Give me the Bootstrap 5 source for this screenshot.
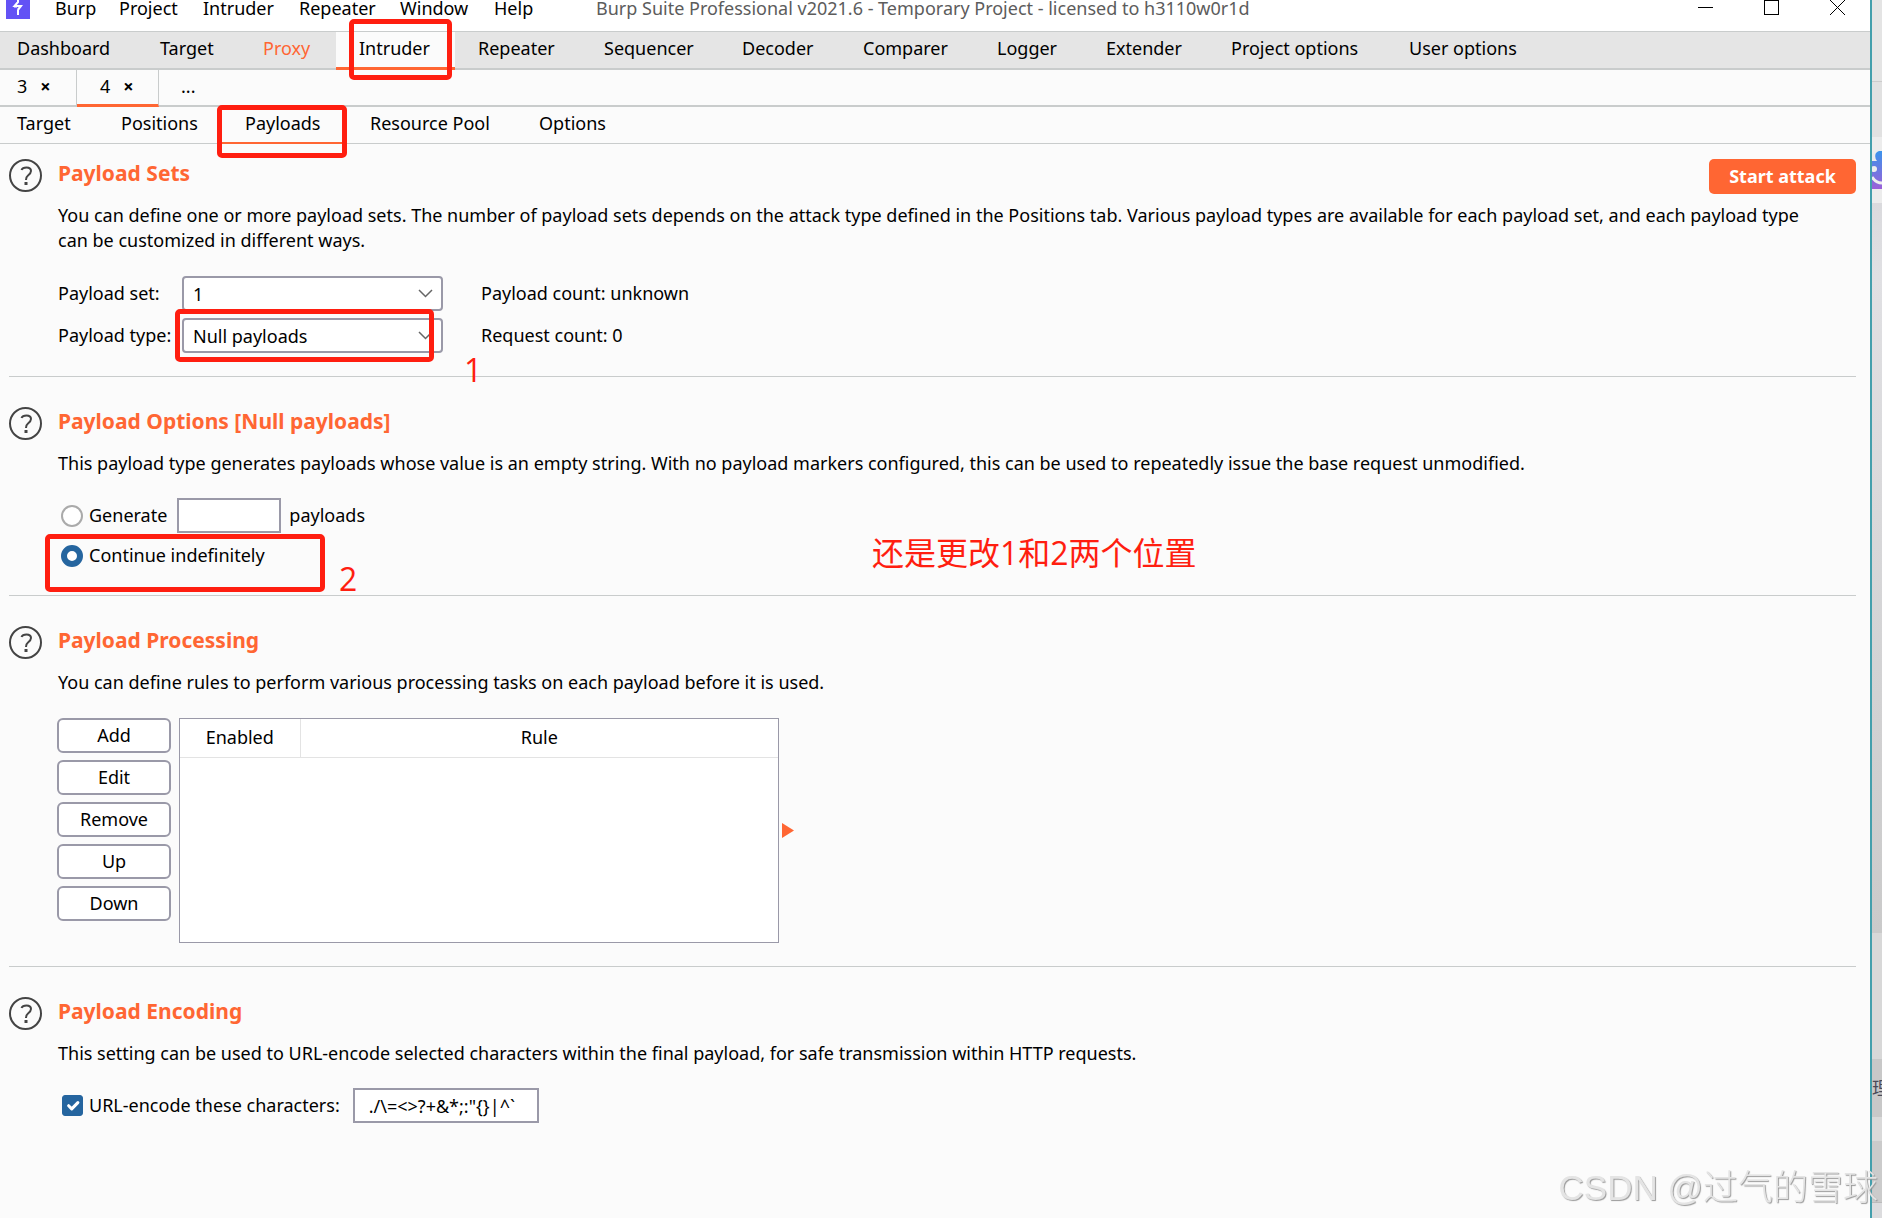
<!DOCTYPE html>
<html lang="en">
<head>
<meta charset="utf-8">
<meta name="viewport" content="width=device-width, initial-scale=1">
<title>Burp Suite Professional v2021.6 - Temporary Project</title>
<link href="https://cdn.jsdelivr.net/npm/bootstrap@5.3.0/dist/css/bootstrap.min.css" rel="stylesheet">
<style>
:root{--burp:#ff6633;--rule:#c9cccc;--edge:#9a99a8;--note:#ff1e10}
body{font-family:"Noto Sans","Open Sans","Noto Sans CJK SC",sans-serif;font-size:18px;line-height:25px;color:#000;background:#dcdcde;overflow:hidden}
a{color:inherit;text-decoration:none}
.app-window{background:#fbfbfb;border-right:2px solid #439fac;min-width:0}
.title-bar{height:31px;background:#fff;padding-left:6px;line-height:17px}
.title-bar .menu-row,.title-bar .window-title,.title-bar .logo-mark{margin-bottom:14px}
.logo-mark{width:24px;height:20px;margin-right:25px}
.menu-row{display:grid;grid-template-columns:64px 84px 96px 101px 94px 102px}
.window-title{color:#5c5c5c}
.win-controls{gap:51px;padding-right:25px}
.win-controls button{border:0;background:none;padding:0;width:15px;height:20px;display:flex}
.tool-tabs{background:#e5e5e5;border-top:1px solid var(--rule);border-bottom:2px solid var(--rule);height:39px;display:grid;
 grid-template-columns:137px 103px 96px 119px 126px 138px 121px 134px 109px 125px 178px auto;justify-content:start}
.tool-tabs a{padding-left:23px;line-height:33px;position:relative;z-index:1}
.tool-tabs a:first-child{padding-left:17px}
.tool-tabs a.proxy-tab{color:var(--burp)}
.tool-tabs a.current{background:#fbfbfb;box-shadow:inset 0 -3px var(--burp);height:38px}
.flagged::after{content:"";position:absolute;border:5px solid var(--note);border-radius:5px;pointer-events:none;z-index:3}
.mark-intruder::after{left:13px;right:3px;top:-13px;bottom:-10px}
.run-tabs{height:37px;border-bottom:2px solid var(--rule)}
.run-tabs a{display:flex;gap:13px;padding:0 25px 0 17px;line-height:33px;border-right:1px solid var(--rule);width:77px}
.run-tabs a.current{width:82px;padding-left:23px;height:37px;border-bottom:3px solid var(--burp)}
.run-tabs a.more{border:0;padding-left:22px}
.run-tabs span{font-weight:700}
.sub-tabs{height:37px;border-bottom:1px solid var(--rule);display:grid;grid-template-columns:97px 124px 125px 169px auto;justify-content:start}
.sub-tabs a{padding-left:24px;line-height:32px;position:relative}
.sub-tabs a:first-child{padding-left:17px}
.sub-tabs a.current{box-shadow:inset 0 -2px var(--burp);height:37px}
.mark-payloads::after{left:-4px;right:-1px;top:-2px;bottom:-14px}
.panel{margin:0 14px 0 9px;padding:13px 0 23px;border-bottom:1px solid var(--rule);gap:16px;position:relative}
.panel + .panel{padding-top:28px}
.panel:last-child{border:0}
.help-btn{border:0;background:none;padding:0;width:33px;height:35px;margin-top:1px;flex:none}
.panel-body{min-width:0}
h2{font-size:21px;line-height:32px;font-weight:700;color:var(--burp);margin:0 0 14px}
.attack-btn{background:var(--burp);color:#fff;font-weight:700;border:0;border-radius:5px;width:147px;height:35px;padding:0;font-size:18px;line-height:35px;position:absolute;right:0;top:15px}
.attack-btn:hover{background:#e8551f;color:#fff}
p{margin:0;padding-right:32px}
.set-grid{display:grid;grid-template-columns:124px 261px auto;row-gap:7px;margin-top:23px;align-items:center;justify-content:start}
.set-grid .count-text{padding-left:38px}
.pick{appearance:none;border:2px solid var(--edge);border-radius:4px;height:35px;padding:0 34px 0 9px;font-size:18px;line-height:28px;color:#000;background-color:#fff;background-size:15px 9px;background-position:right 8px center;
 background-image:url("data:image/svg+xml,%3Csvg xmlns='http://www.w3.org/2000/svg' viewBox='0 0 15 9'%3E%3Cpath d='M1 1l6.500 6.500L14 1' fill='none' stroke='%23666' stroke-width='1.500'/%3E%3C/svg%3E")}
.holder{position:relative}
.mark-type::after{left:-7px;right:9px;top:-9px;bottom:-9px}
.note{position:absolute;color:var(--note);font-family:"Open Sans","Noto Sans CJK SC",sans-serif;font-size:32px;line-height:36px;white-space:nowrap;z-index:3}
.note-one{left:282px;top:34px}
.note-two{left:281px;top:28px}
.note-main{left:863px;top:158px}
.plain-box{border:2px solid var(--edge);border-radius:0;height:35px;padding:0 14px;font-size:18px;line-height:28px;color:#000;background:#fff}
.form-check-input.dot{width:22px;height:22px;margin:0 6px 0 3px;border:2px solid #aaa;flex:none}
.form-check-input.dot:checked{background:#fff;border:6px solid #25659f}
.gen-row{margin-top:22px;height:35px}
.gen-row .plain-box{width:104px;margin:0 8px 0 10px}
.endless-row{height:45px;position:relative}
.mark-endless::after{left:-13px;width:280px;top:1px;height:58px}
.options-panel{padding-bottom:17px}
.stack-list{gap:7px}
.stack-btn{width:114px;height:35px;border:2px solid var(--edge);border-radius:6px;background:#fff;padding:0;font-size:18px;line-height:29px;color:#000}
.rule-area{margin-top:23px;gap:8px;margin-left:-1px}
.rule-box{width:600px;height:225px;border:1px solid var(--edge);background:#fff}
.rule-box table{width:100%;table-layout:fixed;border-collapse:collapse}
.rule-box th{font-weight:400;text-align:center;height:38px;border-bottom:1px solid #e3e3e3;padding:0}
.rule-box th:first-child{width:120px;border-right:1px solid #e3e3e3}
.arrow{margin-left:3px}
.form-check-input.tick{width:21px;height:21px;margin:0 6px 0 4px;flex:none;border-radius:3px}
.form-check-input.tick:checked{background-color:#25659f;border-color:#25659f;background-size:20px}
.enc-row{margin-top:22px;height:35px}
.enc-row .plain-box{width:186px;margin-left:13px}
.behind{width:10px;flex:none;color:#4b4b58;overflow:hidden}
.behind div{flex:none}
.watermark{position:fixed;right:4px;bottom:6px;font-family:"Liberation Sans","Noto Sans CJK SC",sans-serif;font-weight:300;font-size:35px;line-height:48px;color:#e4e4e4;text-shadow:1px 1px 1px #999;z-index:5}
.strip-a{height:82px;background:#e4e4e4;border-bottom:1px solid #ccc}
.strip-b{height:55px;background:#e1e1e1}
.strip-c{height:66px;background:#ececec;padding-top:14px}
.strip-d{height:730px;background:linear-gradient(#dadadd,#e0e0e3 10%,#cacaca)}
.strip-e{height:126px;background:#d8d8d8}
.strip-f{height:58px;background:#c8c8c8;line-height:58px;white-space:nowrap}
.strip-g{height:24px;background:#d9d9d9}
.strip-h{height:62px;background:#cbcbcb;border-bottom:1px solid #bbb}
</style>
<script src="https://cdn.jsdelivr.net/npm/bootstrap@5.3.0/dist/js/bootstrap.bundle.min.js"></script>
</head>
<body>
<div class="d-flex vh-100">
<div class="app-window flex-grow-1">
 <header class="title-bar d-flex align-items-center">
  <svg class="logo-mark flex-shrink-0" viewBox="0 0 24 20" aria-label="Burp"><rect width="24" height="20" fill="#6352f5"/><path d="M12 0v3L8.500 7h6.500L12 11v5M8 7.500h3M15 7l-3 3.500" fill="none" stroke="#fff" stroke-width="2"/></svg>
  <nav class="menu-row"><a href="#">Burp</a><a href="#">Project</a><a href="#">Intruder</a><a href="#">Repeater</a><a href="#">Window</a><a href="#">Help</a></nav>
  <span class="window-title">Burp Suite Professional v2021.6 - Temporary Project - licensed to h3110w0r1d</span>
  <div class="win-controls d-flex ms-auto align-self-start">
   <button aria-label="Minimize"><svg width="15" height="16"><path d="M0 7.500h15" stroke="#000"/></svg></button>
   <button aria-label="Maximize"><svg width="15" height="16"><rect x=".5" y=".5" width="14" height="14" fill="none" stroke="#000"/></svg></button>
   <button aria-label="Close"><svg width="15" height="16"><path d="M0 0l15 15M15 0L0 15" stroke="#000"/></svg></button>
  </div>
 </header>
 <nav class="tool-tabs">
  <a href="#">Dashboard</a><a href="#">Target</a><a href="#" class="proxy-tab">Proxy</a><a href="#" class="current flagged mark-intruder">Intruder</a><a href="#">Repeater</a><a href="#">Sequencer</a><a href="#">Decoder</a><a href="#">Comparer</a><a href="#">Logger</a><a href="#">Extender</a><a href="#">Project options</a><a href="#">User options</a>
 </nav>
 <nav class="run-tabs d-flex"><a href="#">3 <span>×</span></a><a href="#" class="current">4 <span>×</span></a><a href="#" class="more">...</a></nav>
 <nav class="sub-tabs"><a href="#">Target</a><a href="#">Positions</a><a href="#" class="current flagged mark-payloads">Payloads</a><a href="#">Resource Pool</a><a href="#">Options</a></nav>
 <main>
  <section class="panel d-flex align-items-start">
   <button class="help-btn" aria-label="Help"><svg width="33" height="33" viewBox="0 0 33 33"><circle cx="16.500" cy="16.500" r="15.500" fill="none" stroke="#444" stroke-width="2"/><path d="M12.500 11q1-2.500 5-2.500 4.500 0 4.500 3.500 0 2-3 4.500-2 1.500-2 4.500" fill="none" stroke="#444" stroke-width="2"/><rect x="15.500" y="23" width="3" height="3" fill="#444"/></svg></button>
   <div class="panel-body"><h2>Payload Sets</h2>
    <p>You can define one or more payload sets. The number of payload sets depends on the attack type defined in the Positions tab. Various payload types are available for each payload set, and each payload type can be customized in different ways.</p>
    <div class="set-grid">
     <label for="pset">Payload set:</label><select id="pset" class="form-select pick"><option>1</option></select><span class="count-text">Payload count: unknown</span>
     <label for="ptype">Payload type:</label><div class="holder flagged mark-type"><select id="ptype" class="form-select pick"><option>Null payloads</option></select><span class="note note-one">1</span></div><span class="count-text">Request count: 0</span>
    </div></div>
   <button class="btn attack-btn">Start attack</button>
  </section>
  <section class="panel options-panel d-flex align-items-start">
   <button class="help-btn" aria-label="Help"><svg width="33" height="33" viewBox="0 0 33 33"><circle cx="16.500" cy="16.500" r="15.500" fill="none" stroke="#444" stroke-width="2"/><path d="M12.500 11q1-2.500 5-2.500 4.500 0 4.500 3.500 0 2-3 4.500-2 1.500-2 4.500" fill="none" stroke="#444" stroke-width="2"/><rect x="15.500" y="23" width="3" height="3" fill="#444"/></svg></button>
   <div class="panel-body"><h2>Payload Options [Null payloads]</h2>
    <p>This payload type generates payloads whose value is an empty string. With no payload markers configured, this can be used to repeatedly issue the base request unmodified.</p>
    <div class="gen-row d-flex align-items-center"><input type="radio" name="gen" id="g1" class="form-check-input dot"><label for="g1">Generate</label><input type="text" class="plain-box" id="gn" aria-label="Number of payloads"><label for="gn">payloads</label></div>
    <div class="endless-row d-flex align-items-center flagged mark-endless"><input type="radio" name="gen" id="g2" class="form-check-input dot" checked><label for="g2">Continue indefinitely</label><span class="note note-two">2</span></div>
   </div>
   <span class="note note-main" lang="zh-CN">还是更改1和2两个位置</span>
  </section>
  <section class="panel d-flex align-items-start">
   <button class="help-btn" aria-label="Help"><svg width="33" height="33" viewBox="0 0 33 33"><circle cx="16.500" cy="16.500" r="15.500" fill="none" stroke="#444" stroke-width="2"/><path d="M12.500 11q1-2.500 5-2.500 4.500 0 4.500 3.500 0 2-3 4.500-2 1.500-2 4.500" fill="none" stroke="#444" stroke-width="2"/><rect x="15.500" y="23" width="3" height="3" fill="#444"/></svg></button>
   <div class="panel-body"><h2>Payload Processing</h2>
    <p>You can define rules to perform various processing tasks on each payload before it is used.</p>
    <div class="rule-area d-flex">
     <div class="stack-list d-flex flex-column"><button class="btn stack-btn">Add</button><button class="btn stack-btn">Edit</button><button class="btn stack-btn">Remove</button><button class="btn stack-btn">Up</button><button class="btn stack-btn">Down</button></div>
     <div class="d-flex align-items-center"><div class="rule-box"><table><thead><tr><th>Enabled</th><th>Rule</th></tr></thead></table></div>
     <svg class="arrow" width="12" height="15"><path d="M0 0l12 7.500L0 15z" fill="#ff6633"/></svg></div>
    </div></div>
  </section>
  <section class="panel d-flex align-items-start">
   <button class="help-btn" aria-label="Help"><svg width="33" height="33" viewBox="0 0 33 33"><circle cx="16.500" cy="16.500" r="15.500" fill="none" stroke="#444" stroke-width="2"/><path d="M12.500 11q1-2.500 5-2.500 4.500 0 4.500 3.500 0 2-3 4.500-2 1.500-2 4.500" fill="none" stroke="#444" stroke-width="2"/><rect x="15.500" y="23" width="3" height="3" fill="#444"/></svg></button>
   <div class="panel-body"><h2>Payload Encoding</h2>
    <p>This setting can be used to URL-encode selected characters within the final payload, for safe transmission within HTTP requests.</p>
    <div class="enc-row d-flex align-items-center"><input type="checkbox" class="form-check-input tick" id="enc" checked><label for="enc">URL-encode these characters:</label><input type="text" class="plain-box" aria-label="Characters" value="./\=&lt;&gt;?+&amp;*;:&quot;{}|^`"></div>
   </div>
  </section>
 </main>
</div>
<aside class="behind d-flex flex-column">
 <div class="strip-a"></div>
 <div class="strip-b"></div>
 <div class="strip-c"><svg width="10" height="40"><defs><linearGradient id="bot" x2="0" y2="1"><stop stop-color="#3b94ec"/><stop offset="1" stop-color="#9c60d8"/></linearGradient></defs><path d="M0 10h5q-3-4-1-8 3-3 6-2v38H0z" fill="url(#bot)"/><circle cx="2" cy="18" r="3" fill="#eee"/><path d="M0 26q4 6 10 6" fill="none" stroke="#eee" stroke-width="3"/></svg></div>
 <div class="strip-d"></div>
 <div class="strip-e"></div>
 <div class="strip-f" lang="zh-CN">理</div>
 <div class="strip-g"></div>
 <div class="strip-h"></div>
 <div class="flex-fill"></div>
</aside>
</div>
<div class="watermark" lang="zh-CN">CSDN @过气的雪球</div>
</body>
</html>
